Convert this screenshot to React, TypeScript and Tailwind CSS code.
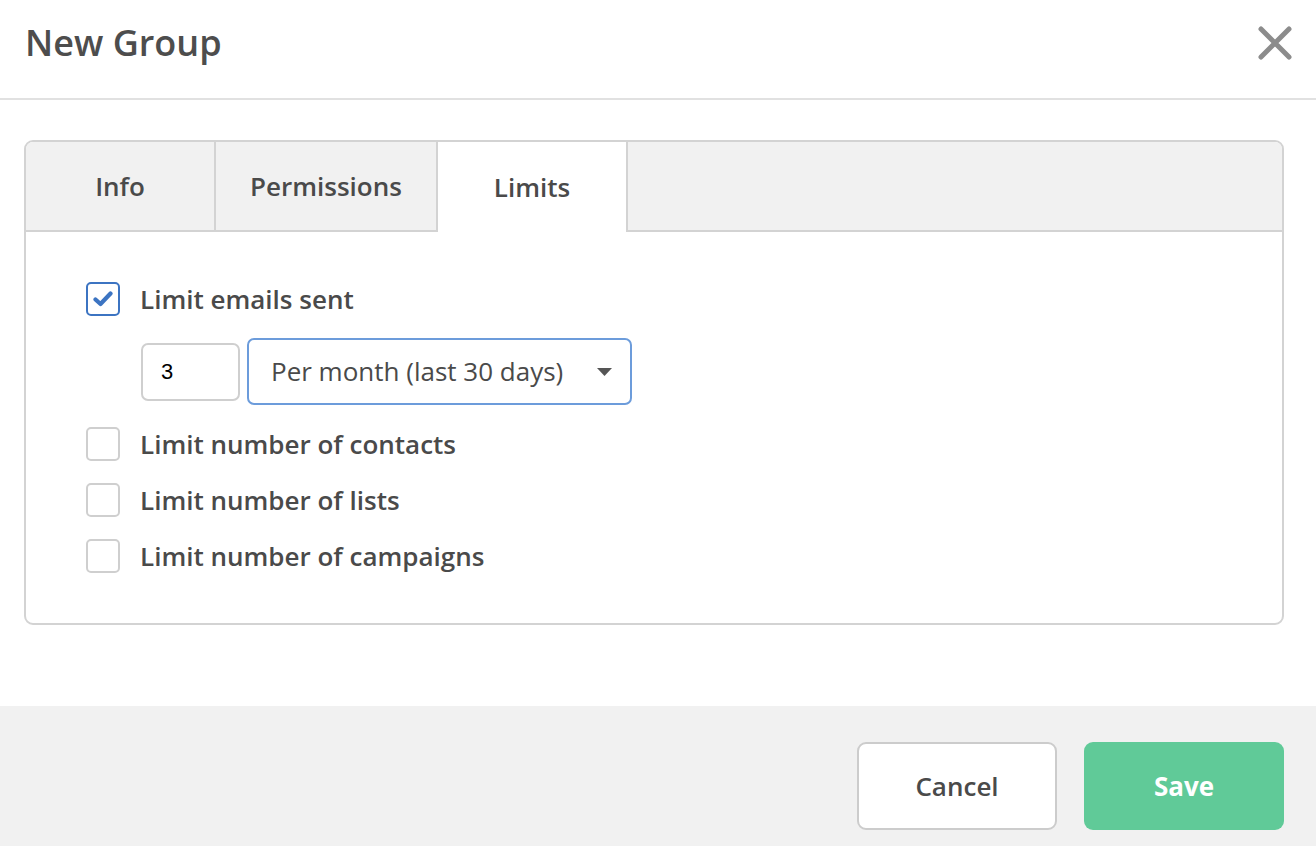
const font = { fontFamily: '"Open Sans", "Noto Sans", sans-serif' }

function Box({ checked, label }: { checked?: boolean; label: string }) {
  return (
    <label className="flex h-[34px] items-center gap-[20px]">
      <span
        className={
          checked
            ? 'flex h-[34px] w-[34px] items-center justify-center rounded-[5px] border-2 border-[#3c74c2] bg-white'
            : 'h-[34px] w-[34px] rounded-[5px] border-2 border-[#cfcfcf] bg-white'
        }
      >
        {checked && (
          <svg width="20" height="16" viewBox="0 0 20 16">
            <path d="M2.5 8.5 L7.5 13 L17.5 2.5" fill="none" stroke="#3c74c2" strokeWidth="4.2" strokeLinecap="round" strokeLinejoin="round" />
          </svg>
        )}
      </span>
      <span className="text-[26px] leading-[34px] font-semibold text-[#4a4a4a]">{label}</span>
    </label>
  )
}

export default function App() {
  const tabs = [
    { name: 'Info', w: 'w-[190px]' },
    { name: 'Permissions', w: 'w-[222px]' },
    { name: 'Limits', w: 'w-[190px]', active: true },
  ]

  return (
    <div className="flex h-[846px] w-[1316px] flex-col overflow-hidden bg-white" style={font}>
      <header className="flex h-[100px] shrink-0 items-center justify-between border-b-2 border-[#e1e1e1] pl-[25px] pr-[24px]">
        <h1 className="pb-[12px] text-[36px] font-semibold text-[#4d4d4d]">New Group</h1>
        <svg width="34" height="34" viewBox="0 0 34 34" className="mb-[12px]">
          <path d="M3 3 L31 31 M31 3 L3 31" stroke="#8c8c8c" strokeWidth="5" strokeLinecap="round" />
        </svg>
      </header>

      <main className="flex-1 pl-[24px] pr-[32px] pt-[40px]">
        <section className="overflow-hidden rounded-[9px] border-2 border-[#d3d3d3]">
          <nav className="flex h-[90px] bg-[#f1f1f1]">
            {tabs.map((t) => (
              <div
                key={t.name}
                className={
                  t.active
                    ? `${t.w} flex items-center justify-center border-r-2 border-[#d3d3d3] bg-white text-[26px] font-semibold text-[#4a4a4a]`
                    : `${t.w} flex items-center justify-center border-r-2 border-b-2 border-[#d3d3d3] text-[26px] font-semibold text-[#4a4a4a]`
                }
              >
                {t.name}
              </div>
            ))}
            <div className="flex-1 border-b-2 border-[#d3d3d3]" />
          </nav>

          <div className="flex flex-col px-[60px] pt-[50px] pb-[50px]">
            <Box checked label="Limit emails sent" />
            <div className="mt-[22px] mb-[22px] flex items-center gap-[7px] pl-[55px]">
              <div
                className="flex h-[58px] w-[99px] items-center rounded-[7px] border-2 border-[#cfcfcf] pl-[18px] text-[22px] text-black"
                style={{ fontFamily: '"Liberation Sans", Arial, sans-serif' }}
              >
                3
              </div>
              <div className="flex h-[67px] w-[385px] items-center justify-between rounded-[7px] border-2 border-[#6c9cdb] pl-[22px] pr-[18px] text-[26px] text-[#4a4a4a]">
                <span>Per month (last 30 days)</span>
                <svg width="15" height="8" viewBox="0 0 15 8">
                  <path d="M0 0 H15 L7.5 8 Z" fill="#555" />
                </svg>
              </div>
            </div>
            <div className="flex flex-col gap-[22px]">
              <Box label="Limit number of contacts" />
              <Box label="Limit number of lists" />
              <Box label="Limit number of campaigns" />
            </div>
          </div>
        </section>
      </main>

      <footer className="flex h-[140px] shrink-0 items-start justify-end gap-[27px] bg-[#f1f1f1] pt-[36px] pr-[32px]">
        <button className="h-[88px] w-[200px] rounded-[9px] border-2 border-[#cccccc] bg-white text-[26px] font-semibold text-[#4a4a4a]">
          Cancel
        </button>
        <button className="h-[88px] w-[200px] rounded-[9px] bg-[#60ca98] text-[26px] font-bold text-white">
          Save
        </button>
      </footer>
    </div>
  )
}
